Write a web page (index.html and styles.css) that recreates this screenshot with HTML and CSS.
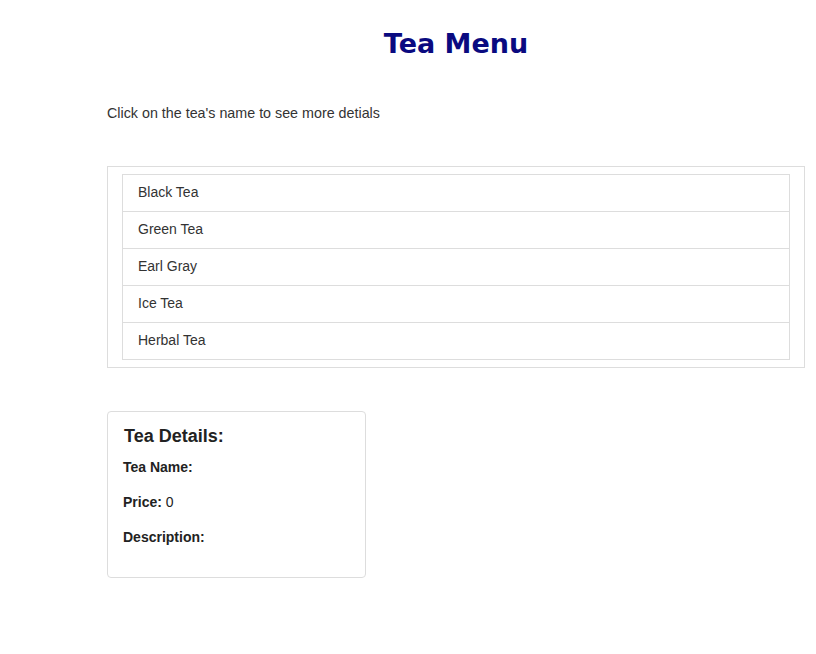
FILE: index.html
```html
<!DOCTYPE html>
<html>
<head>
<meta charset="utf-8">
<link rel="stylesheet" href="styles.css">
</head>
<body>
<div class="page">
  <h1 class="title">Tea Menu</h1>
  <p class="hint">Click on the tea's name to see more detials</p>
  <div class="menu-box">
    <ul class="tea-list">
      <li class="tea-item">Black Tea</li>
      <li class="tea-item">Green Tea</li>
      <li class="tea-item">Earl Gray</li>
      <li class="tea-item">Ice Tea</li>
      <li class="tea-item">Herbal Tea</li>
    </ul>
  </div>
  <div class="details">
    <h3 class="details-title">Tea Details:</h3>
    <p class="detail-line"><b>Tea Name:</b> </p>
    <p class="detail-line"><b>Price:</b> 0</p>
    <p class="detail-line"><b>Description:</b> </p>
  </div>
</div>
</body>
</html>
```

FILE: styles.css
```css
html, body {
  margin: 0;
  padding: 0;
  background: #fff;
}
body {
  font-family: "Liberation Sans", Arial, sans-serif;
  font-size: 14px;
  color: #333;
}
.page {
  margin-left: 107px;
  width: 698px;
  padding-top: 28px;
}
.title {
  margin: 0;
  text-align: center;
  font-family: "DejaVu Sans", Verdana, sans-serif;
  font-weight: bold;
  font-size: 27px;
  line-height: 32px;
  color: #0a0a80;
}
.hint {
  margin: 43px 0 0;
  font-size: 14.3px;
  line-height: 20px;
}
.menu-box {
  margin-top: 43px;
  border: 1px solid #ddd;
  padding: 7px 14px 7px 14px;
}
.tea-list {
  list-style: none;
  margin: 0;
  padding: 0;
  border-bottom: 1px solid #ddd;
}
.tea-item {
  border: 1px solid #ddd;
  border-bottom: none;
  padding: 7px 15px 9px;
  line-height: 20px;
}
.details {
  margin-top: 43px;
  width: 227px;
  border: 1px solid #ddd;
  border-radius: 4px;
  padding: 14px 15px 15px;
  color: #222;
}
.details-title {
  margin: 0 0 11px;
  font-size: 18px;
  line-height: 20px;
  font-weight: bold;
  padding-left: 1px;
}
.detail-line {
  margin: 0 0 15px;
  font-size: 14px;
  line-height: 20px;
}
.detail-line b {
  font-weight: bold;
}
```
